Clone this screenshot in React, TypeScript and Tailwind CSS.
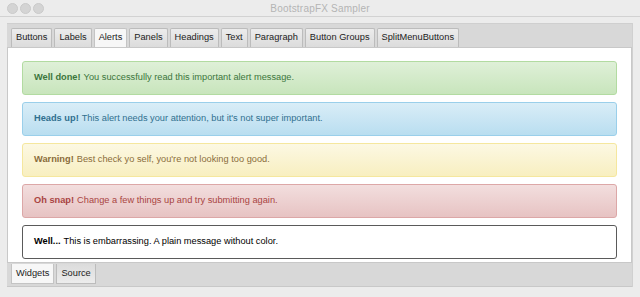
import React from 'react';

const topTabs = ['Buttons', 'Labels', 'Alerts', 'Panels', 'Headings', 'Text', 'Paragraph', 'Button Groups', 'SplitMenuButtons'];

const alerts = [
  { strong: 'Well done!', text: 'You successfully read this important alert message.', cls: 'bg-gradient-to-b from-[#dff0d8] to-[#c8e5bc] border-[#b2dba1] text-[#3c763d]' },
  { strong: 'Heads up!', text: "This alert needs your attention, but it's not super important.", cls: 'bg-gradient-to-b from-[#d9edf7] to-[#b9def0] border-[#9acfea] text-[#31708f]' },
  { strong: 'Warning!', text: "Best check yo self, you're not looking too good.", cls: 'bg-gradient-to-b from-[#fcf8e3] to-[#f8efc0] border-[#f5e79e] text-[#8a6d3b]' },
  { strong: 'Oh snap!', text: 'Change a few things up and try submitting again.', cls: 'bg-gradient-to-b from-[#f2dede] to-[#e7c3c3] border-[#dca7a7] text-[#a94442]' },
  { strong: 'Well...', text: 'This is embarrassing. A plain message without color.', cls: 'bg-white border-[#5a5a5a] text-black' },
];

const Tab: React.FC<{ label: string; active?: boolean }> = ({ label, active }) => (
  <div
    className={`h-[19px] px-[4px] flex items-center border border-b-0 rounded-t-[2px] ${
      active ? 'bg-[#f7f7f7] border-[#c4c4c4]' : 'bg-gradient-to-b from-[#ececec] to-[#dcdcdc] border-[#bcbcbc]'
    }`}
  >
    {label}
  </div>
);

export default function App() {
  return (
    <div className="w-[640px] h-[297px] bg-[#ececec] flex flex-col text-[9.25px] text-[#222] font-['Liberation_Sans',Arial,sans-serif] overflow-hidden">
      {/* Title bar */}
      <div className="relative h-[17px] shrink-0 flex items-center justify-center border-b border-[#d2d2d2] bg-[#ececec]">
        <div className="absolute left-[7px] top-[3px] flex gap-[2px]">
          <span className="w-[11px] h-[11px] rounded-full bg-[#d4d4d4] border border-[#cacaca]" />
          <span className="w-[11px] h-[11px] rounded-full bg-[#d4d4d4] border border-[#cacaca]" />
          <span className="w-[11px] h-[11px] rounded-full bg-[#d4d4d4] border border-[#cacaca]" />
        </div>
        <span className="text-[10px] text-[#b4b4b4] tracking-[0.2px]">BootstrapFX Sampler</span>
      </div>

      {/* Tab pane */}
      <div className="flex-1 flex flex-col px-[7px] pt-[6px] pb-[10px] min-h-0">
        <div className="flex-1 flex flex-col min-h-0 border-r border-[#d0d0d0]">
          <div className="h-[24px] shrink-0 bg-[#d8d8d8] border-t border-[#cfcfcf] flex items-end gap-[2px] pl-[4px]">
            {topTabs.map((t) => (
              <Tab key={t} label={t} active={t === 'Alerts'} />
            ))}
          </div>
          <div className="flex-1 min-h-0 bg-white border border-[#c8c8c8] pt-[13px] px-[14px] flex flex-col gap-[7px] overflow-hidden">
            {alerts.map((a) => (
              <div key={a.strong} className={`h-[34px] shrink-0 border rounded-[3px] flex items-center px-[11px] ${a.cls}`}>
                <span className="font-bold mr-[3px]">{a.strong}</span>
                <span>{a.text}</span>
              </div>
            ))}
          </div>
          <div className="h-[24px] shrink-0 bg-[#d8d8d8] border-b border-[#c8c8c8] flex items-start gap-[2px] pl-[4px] pt-[1px]">
            <div className="h-[20px] px-[4px] flex items-center bg-[#f7f7f7] border border-t-0 border-[#c4c4c4]">Widgets</div>
            <div className="h-[20px] px-[4px] flex items-center bg-gradient-to-b from-[#dcdcdc] to-[#ececec] border border-t-0 border-[#bcbcbc]">Source</div>
          </div>
        </div>
      </div>
    </div>
  );
}
